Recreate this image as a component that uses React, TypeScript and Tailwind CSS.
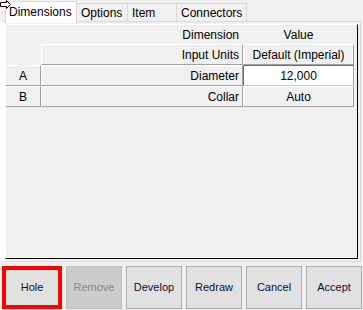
const tabs = ["Options", "Item", "Connectors"];
const tabWidths = ["w-[51px]", "w-[49px]", "w-[70px]"];

const Raised = ({ w, children, align = "right" }: { w: string; children?: React.ReactNode; align?: "right" | "center" }) => (
  <div
    className={`${w} h-full flex items-center border-t border-l border-white border-r border-b border-r-[#a0a0a0] border-b-[#a0a0a0] ${
      align === "right" ? "justify-end pr-[3px]" : "justify-center"
    }`}
  >
    {children}
  </div>
);

const Row = ({ label, name, value, input }: { label?: string; name: string; value: string; input?: boolean }) => (
  <div className="flex h-[21px]">
    {label ? (
      <div className="w-[35px] h-full flex items-center justify-center border-t border-white border-r border-b border-r-[#a0a0a0] border-b-[#a0a0a0]">
        {label}
      </div>
    ) : (
      <div className="w-[35px]" />
    )}
    <Raised w="w-[202px]">{name}</Raised>
    {input ? (
      <div className="w-[111px] h-full flex items-center justify-center bg-white border-t border-l border-[#6e6e6e] border-r border-b border-r-[#a0a0a0] border-b-[#c8c8c8]">
        {value}
      </div>
    ) : (
      <Raised w="w-[111px]" align="center">
        {value}
      </Raised>
    )}
  </div>
);

const Button = ({ label, disabled, active }: { label: string; disabled?: boolean; active?: boolean }) => (
  <div
    className={`h-[43px] flex items-center justify-center text-[11px] ${
      active
        ? "w-[60px] border-4 border-[#ff0000] bg-[#e1e1e1] text-[#101030]"
        : disabled
        ? "w-[56px] border border-[#bfbfbf] bg-[#cccccc] text-[#8a8a8a]"
        : "w-[56px] border border-[#adadad] bg-[#e1e1e1] text-[#101030]"
    }`}
  >
    {label}
  </div>
);

export default function App() {
  return (
    <div
      className="relative w-[363px] h-[310px] bg-[#f0f0f0] overflow-hidden text-[12px] text-black"
      style={{ fontFamily: '"Liberation Sans", Arial, sans-serif' }}
    >
      {/* tab strip */}
      <div className="flex items-end h-[22px] pl-[5px]">
        <div className="relative z-10 w-[72px] h-[22px] -mb-px bg-white border border-b-0 border-[#d9d9d9] flex items-center pl-[3px] pb-[1px]">
          Dimensions
        </div>
        {tabs.map((t, i) => (
          <div
            key={t}
            className={`${tabWidths[i]} h-[19px] bg-[#f0f0f0] border border-l-0 border-[#d9d9d9] flex items-center pl-[4px]`}
          >
            {t}
          </div>
        ))}
      </div>

      {/* tab page */}
      <div className="w-[361px] h-[241px] -mt-px bg-[#f0f0f0] border-t border-r border-b border-[#d9d9d9] border-l-[5px] border-l-white pt-[2px]">
        <div className="w-[353px] h-[235px] border-t border-l border-white border-r border-b border-r-black border-b-black">
          <div className="flex h-[19px] items-center">
            <div className="w-[35px]" />
            <div className="w-[202px] text-right pr-[4px]">Dimension</div>
            <div className="w-[111px] text-center">Value</div>
          </div>
          <Row name="Input Units" value="Default (Imperial)" />
          <Row label="A" name="Diameter" value="12,000" input />
          <Row label="B" name="Collar" value="Auto" />
        </div>
      </div>

      {/* buttons */}
      <div className="flex gap-[4px] pl-[2px] mt-[4px]">
        <Button label="Hole" active />
        <Button label="Remove" disabled />
        <Button label="Develop" />
        <Button label="Redraw" />
        <Button label="Cancel" />
        <Button label="Accept" />
      </div>

      {/* mouse cursor */}
      <svg className="absolute left-0 top-0 z-20" width="12" height="10" viewBox="0 0 12 10">
        <path d="M0.5 2.5 H6.5 V0.5 L10.5 4.5 L6.5 8.5 V6.5 H0.5 Z" fill="white" stroke="black" strokeWidth="1" />
      </svg>
    </div>
  );
}
